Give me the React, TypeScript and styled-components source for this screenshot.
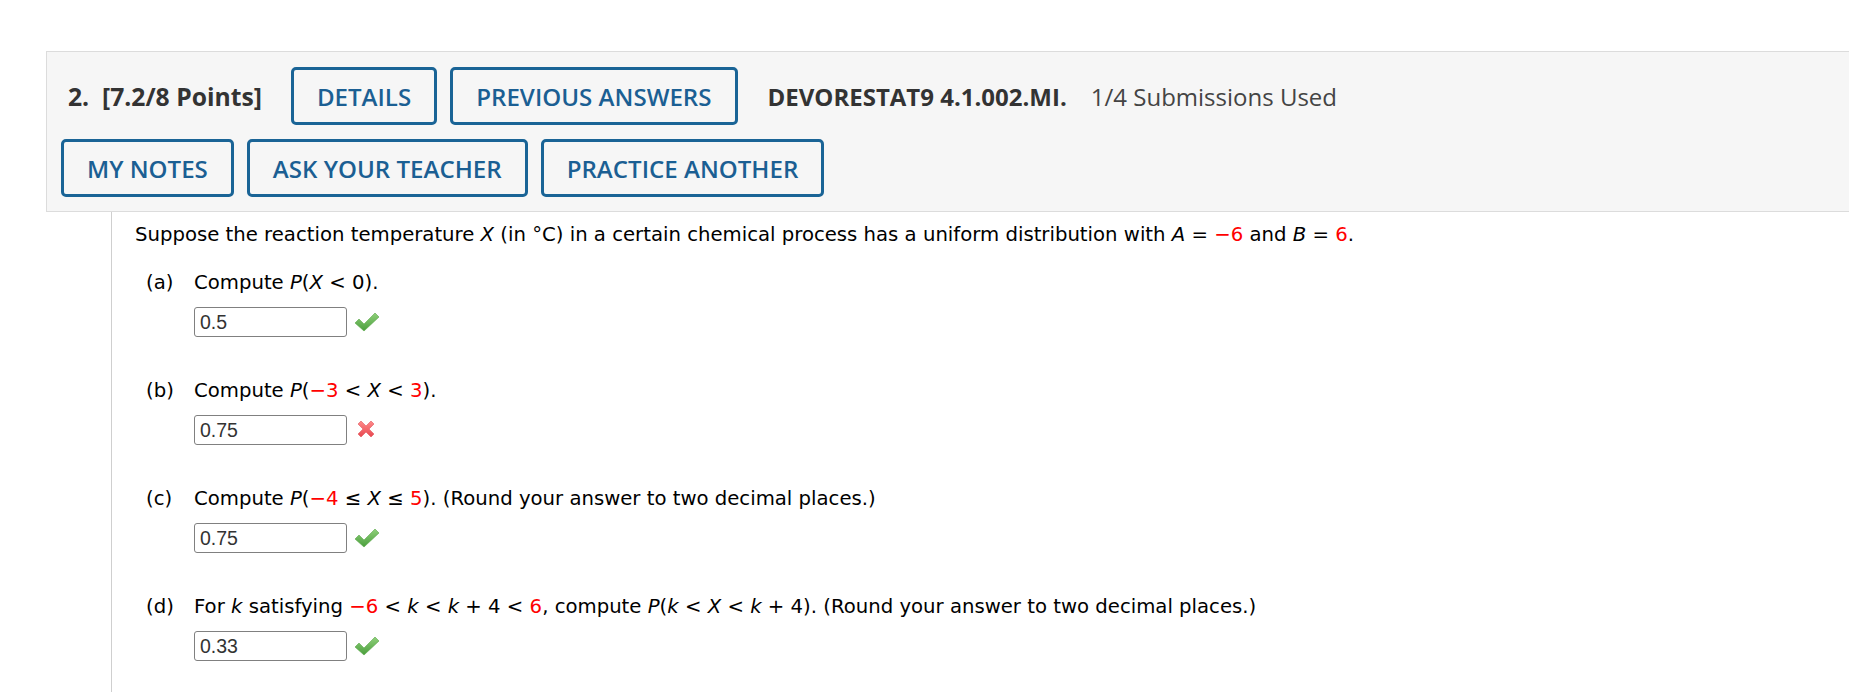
import React from 'react'
import styled, { createGlobalStyle } from 'styled-components'

const GlobalStyle = createGlobalStyle`
    html, body {
        margin: 0;
        padding: 0;
        background: #fff;
    }
    body {
        font-family: "DejaVu Sans", Verdana, sans-serif;
        overflow: hidden;
    }
`
const Page = styled.div`
    padding-top: 51px;
    padding-left: 46px;
    height: 692px;
    box-sizing: border-box;
    display: flex;
    flex-direction: column;
`
const Header = styled.div`
    background-color: #f6f6f6;
    border: 1px solid #dcdcdc;
    border-right: none;
    padding: 15px 0 14px 14px;
    display: flex;
    flex-direction: column;
    gap: 14px;
`
const HeaderRow = styled.div`
    display: flex;
    align-items: center;
    gap: 13px;
`
const QuestionLabel = styled.div`
    font-family: "Open Sans", sans-serif;
    font-weight: 700;
    font-size: 24.7px;
    color: #333;
    margin-left: 7px;
    margin-right: 16px;
    white-space: pre;
`
const ActionButton = styled.button`
    font-family: "Open Sans", sans-serif;
    font-weight: 600;
    font-size: 24.1px;
    color: #1b5f93;
    background: transparent;
    border: 3px solid #1a6496;
    border-radius: 5px;
    height: 58px;
    padding: 0 23px;
    text-transform: uppercase;
    cursor: pointer;
`
const AssignmentCode = styled.div<{ $bold?: boolean }>`
    font-family: "Open Sans", sans-serif;
    font-weight: ${p => (p.$bold ? 700 : 400)};
    font-size: 24px;
    color: ${p => (p.$bold ? '#333' : '#444')};
    margin-left: ${p => (p.$bold ? '17px' : '11px')};
`
const Content = styled.div`
    flex: 1;
    margin-left: 65px;
    border-left: 1px solid #cfcfcf;
    padding: 11px 0 0 23px;
    color: #000;
    font-size: 19.68px;
    line-height: 24px;
`
const Intro = styled.div``
const Part = styled.div<{ $first?: boolean }>`
    margin-top: ${p => (p.$first ? '24px' : '42px')};
    padding-left: 11px;
`
const PartLabel = styled.div`
    display: flex;
`
const PartLetter = styled.span`
    width: 48px;
    flex-shrink: 0;
`
const AnswerRow = styled.div`
    margin-top: 12px;
    margin-left: 48px;
    display: flex;
    align-items: center;
    gap: 6px;
`
const AnswerBox = styled.div`
    width: 153px;
    height: 30px;
    box-sizing: border-box;
    border: 1px solid #808080;
    border-radius: 3px;
    background: #fff;
    font-family: "Liberation Sans", Arial, sans-serif;
    font-size: 19.5px;
    color: #333;
    padding: 0 5px;
    display: flex;
    align-items: center;
`
const V = styled.i``
const Red = styled.span`
    color: #ff0000;
`

const CheckMark = () => (
    <svg width="28" height="24" viewBox="0 0 28 24">
        <defs>
            <linearGradient id="ck" x1="0" y1="0" x2="0" y2="1">
                <stop offset="0" stopColor="#8fd07a" />
                <stop offset="1" stopColor="#4a9e3c" />
            </linearGradient>
        </defs>
        <path d="M2 13 L6 9 L11 14 L22 3 L26 7 L11 21 Z" fill="url(#ck)" stroke="#5aa84a" strokeWidth="0.6" strokeLinejoin="round" />
    </svg>
)

const CrossMark = () => (
    <svg width="28" height="24" viewBox="0 0 28 24">
        <defs>
            <linearGradient id="cx" x1="0" y1="0" x2="0" y2="1">
                <stop offset="0" stopColor="#ff8a8a" />
                <stop offset="1" stopColor="#e8474f" />
            </linearGradient>
        </defs>
        <path d="M5 6 L8 3 L13 8 L18 3 L21 6 L16 11 L21 16 L18 19 L13 14 L8 19 L5 16 L10 11 Z" fill="url(#cx)" stroke="#e0585e" strokeWidth="0.6" strokeLinejoin="round" />
    </svg>
)

const parts = [
    {
        letter: '(a)',
        text: <>Compute <V>P</V>(<V>X</V> &lt; 0).</>,
        answer: '0.5',
        correct: true,
    },
    {
        letter: '(b)',
        text: <>Compute <V>P</V>(<Red>−3</Red> &lt; <V>X</V> &lt; <Red>3</Red>).</>,
        answer: '0.75',
        correct: false,
    },
    {
        letter: '(c)',
        text: <>Compute <V>P</V>(<Red>−4</Red> ≤ <V>X</V> ≤ <Red>5</Red>). (Round your answer to two decimal places.)</>,
        answer: '0.75',
        correct: true,
    },
    {
        letter: '(d)',
        text: <>For <V>k</V> satisfying <Red>−6</Red> &lt; <V>k</V> &lt; <V>k</V> + 4 &lt; <Red>6</Red>, compute <V>P</V>(<V>k</V> &lt; <V>X</V> &lt; <V>k</V> + 4). (Round your answer to two decimal places.)</>,
        answer: '0.33',
        correct: true,
    },
]

const App = () => {
    return (
        <>
            <GlobalStyle />
            <Page>
                <Header>
                    <HeaderRow>
                        <QuestionLabel>2.  [7.2/8 Points]</QuestionLabel>
                        <ActionButton>Details</ActionButton>
                        <ActionButton>Previous Answers</ActionButton>
                        <AssignmentCode $bold>DEVORESTAT9 4.1.002.MI.</AssignmentCode>
                        <AssignmentCode>1/4 Submissions Used</AssignmentCode>
                    </HeaderRow>
                    <HeaderRow>
                        <ActionButton>My Notes</ActionButton>
                        <ActionButton>Ask Your Teacher</ActionButton>
                        <ActionButton>Practice Another</ActionButton>
                    </HeaderRow>
                </Header>
                <Content>
                    <Intro>
                        Suppose the reaction temperature <V>X</V> (in °C) in a certain chemical process has a uniform distribution with <V>A</V> = <Red>−6</Red> and <V>B</V> = <Red>6</Red>.
                    </Intro>
                    {parts.map((part, i) => (
                        <Part key={part.letter} $first={i === 0}>
                            <PartLabel>
                                <PartLetter>{part.letter}</PartLetter>
                                <span>{part.text}</span>
                            </PartLabel>
                            <AnswerRow>
                                <AnswerBox>{part.answer}</AnswerBox>
                                {part.correct ? <CheckMark /> : <CrossMark />}
                            </AnswerRow>
                        </Part>
                    ))}
                </Content>
            </Page>
        </>
    )
}

export default App
